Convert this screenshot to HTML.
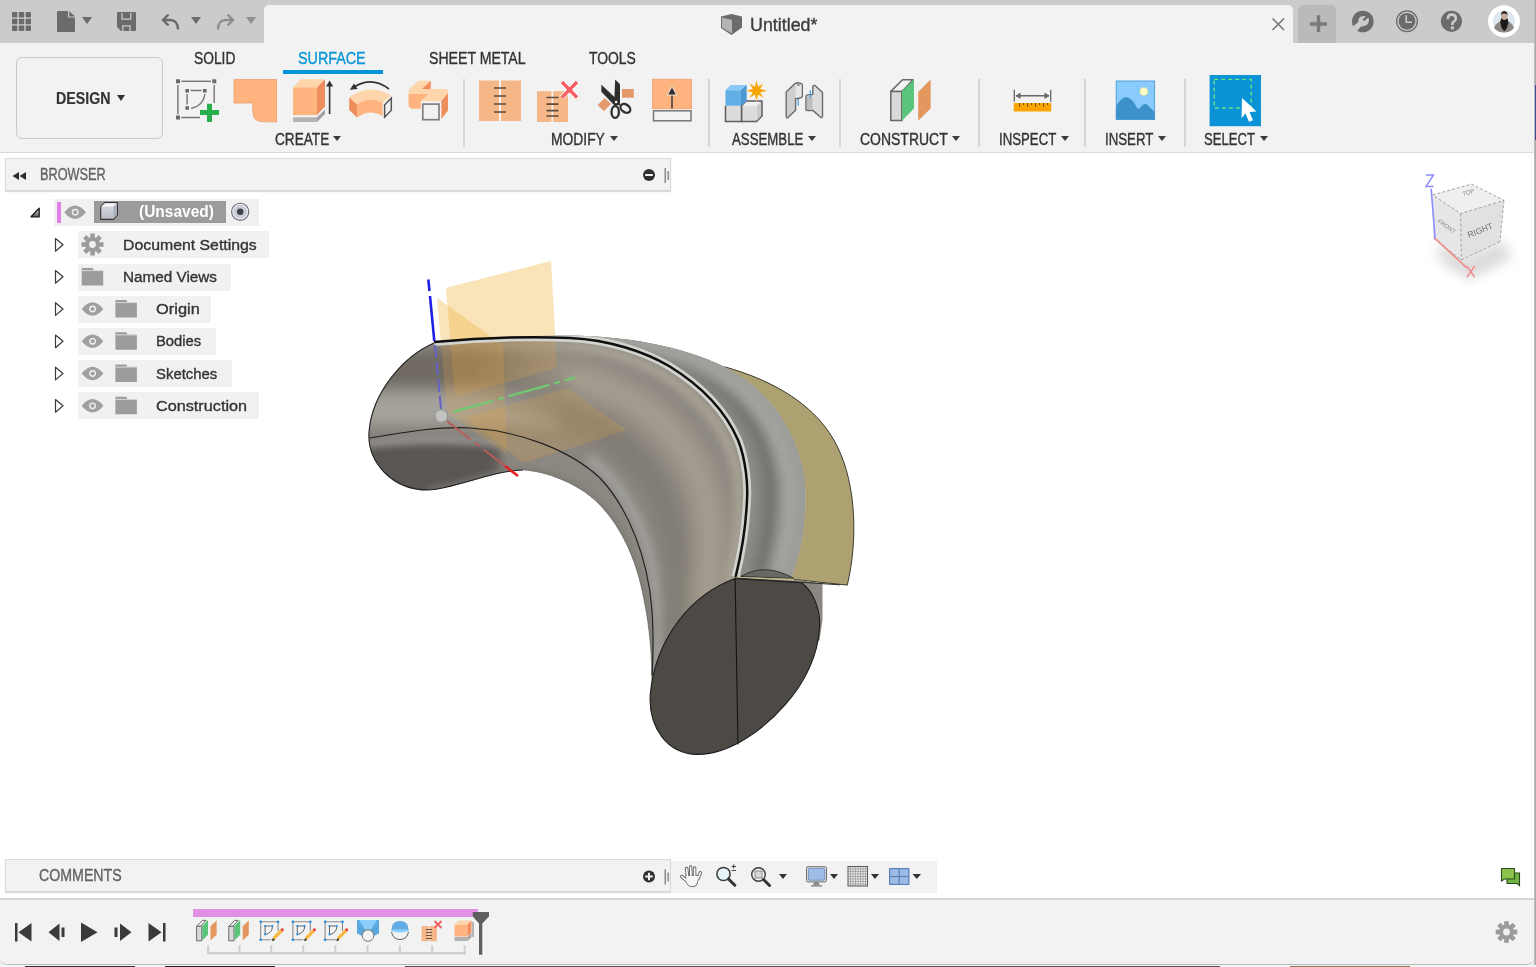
<!DOCTYPE html>
<html><head><meta charset="utf-8">
<style>
*{margin:0;padding:0;box-sizing:border-box}
html,body{width:1536px;height:967px;overflow:hidden;background:#ececec;font-family:"Liberation Sans",sans-serif}
.a{position:absolute}
svg{position:absolute;overflow:visible}
#win{position:absolute;left:0;top:0;width:1534px;height:965px;background:#fff;border-radius:0 0 8px 8px;overflow:hidden;border-bottom:1px solid #b9b9b9}
.t{position:absolute;white-space:nowrap;color:#333;line-height:1;transform-origin:0 0;-webkit-text-stroke:0.35px currentColor}
.tab{font-size:16px;top:50.5px}
.grp{font-size:16px;top:131.5px}
.sep{position:absolute;top:79px;width:2px;height:68px;background:#d6d6d6}
.arr{position:absolute;width:0;height:0;border-left:4px solid transparent;border-right:4px solid transparent;border-top:5.5px solid #3c3c3c}
.panel{position:absolute;background:#f2f2f2;border:1px solid #d9d9d9;box-shadow:0 1px 1px rgba(0,0,0,.14)}
.row{position:absolute;background:#f1f1f1;height:27px}
.rt{position:absolute;font-size:15.5px;color:#333;white-space:nowrap;line-height:1;transform-origin:0 0;-webkit-text-stroke:0.35px currentColor}
.tri{position:absolute}
</style></head><body>
<div class="a" style="left:0;top:965px;width:1536px;height:2px;background:#f4f4f4"></div>
<div class="a" style="left:25px;top:966px;width:110px;height:1px;background:#333"></div>
<div class="a" style="left:165px;top:966px;width:110px;height:1px;background:#222"></div>
<div class="a" style="left:405px;top:966px;width:815px;height:1px;background:#555"></div>
<div class="a" style="left:1290px;top:966px;width:120px;height:1px;background:#8a7a5a"></div>
<div class="a" style="left:1534px;top:0;width:2px;height:965px;background:linear-gradient(90deg,#c4c4c8,#a2a2a6)"></div>
<div class="a" style="left:1534.5px;top:85px;width:1.5px;height:55px;background:#3b4a8a"></div>
<div id="win">
<!-- ===== top bar ===== -->
<div class="a" style="left:0;top:0;width:1535px;height:43px;background:#cbcbcb"></div>
<div class="a" style="left:264px;top:5px;width:1029px;height:38px;background:#f2f2f2;border-radius:5px 5px 0 0"></div>
<div class="a" style="left:1298px;top:5px;width:38px;height:38px;background:#bababa;border-radius:5px 5px 0 0"></div>
<div class="a" style="left:0;top:43px;width:1535px;height:110px;background:#f2f2f2;border-bottom:1px solid #dadada"></div>

<!-- ===== tabs ===== -->
<div class="t tab" style="left:193.6px;transform:scaleX(0.8625)">SOLID</div>
<div class="t tab" style="left:298px;color:#0696d7;transform:scaleX(0.895)">SURFACE</div>
<div class="a" style="left:283px;top:70px;width:100px;height:4px;background:#0696d7"></div>
<div class="t tab" style="left:429.4px;transform:scaleX(0.881)">SHEET METAL</div>
<div class="t tab" style="left:588.8px;transform:scaleX(0.869)">TOOLS</div>

<!-- ===== design button ===== -->
<div class="a" style="left:16px;top:57px;width:147px;height:82px;border:1.5px solid #cacaca;border-radius:6px"></div>
<div class="t" style="left:56px;top:90.5px;font-size:16px;font-weight:bold;color:#333;transform:scaleX(0.89);-webkit-text-stroke:0.15px #333">DESIGN</div>
<div class="arr" style="left:117px;top:95px;border-left-width:4px;border-right-width:4px;border-top:6px solid #333"></div>

<!-- ===== group labels ===== -->
<div class="t grp" style="left:274.9px;transform:scaleX(0.852)">CREATE</div>
<div class="arr" style="left:333px;top:135.5px"></div>
<div class="t grp" style="left:550.5px;transform:scaleX(0.865)">MODIFY</div>
<div class="arr" style="left:610px;top:135.5px"></div>
<div class="t grp" style="left:731.9px;transform:scaleX(0.827)">ASSEMBLE</div>
<div class="arr" style="left:807.5px;top:135.5px"></div>
<div class="t grp" style="left:859.5px;transform:scaleX(0.873)">CONSTRUCT</div>
<div class="arr" style="left:952px;top:135.5px"></div>
<div class="t grp" style="left:999px;transform:scaleX(0.826)">INSPECT</div>
<div class="arr" style="left:1061px;top:135.5px"></div>
<div class="t grp" style="left:1104.7px;transform:scaleX(0.829)">INSERT</div>
<div class="arr" style="left:1158px;top:135.5px"></div>
<div class="t grp" style="left:1204.3px;transform:scaleX(0.818)">SELECT</div>
<div class="arr" style="left:1259.5px;top:135.5px"></div>
<div class="sep" style="left:462.5px"></div>
<div class="sep" style="left:708px"></div>
<div class="sep" style="left:838.5px"></div>
<div class="sep" style="left:978px"></div>
<div class="sep" style="left:1084px"></div>
<div class="sep" style="left:1183.5px"></div>

<!-- ===== title ===== -->
<div class="t" style="left:749.7px;top:16.7px;font-size:17.5px;color:#3c3c3c;transform:scaleX(1.02)">Untitled*</div>

<!-- ===== browser ===== -->
<div class="panel" style="left:5px;top:158px;width:666px;height:33px"></div>
<div class="t" style="left:39.8px;top:167.3px;font-size:16px;color:#636363;transform:scaleX(0.795)">BROWSER</div>

<!-- tree rows -->
<div class="row" style="left:54px;top:199px;width:205px"></div>
<div class="a" style="left:56.5px;top:201.5px;width:4px;height:21px;background:#e181e6"></div>
<div class="a" style="left:94px;top:201.3px;width:131.5px;height:21.5px;background:#9b9b9b"></div>
<div class="t" style="left:138.9px;top:203.9px;font-size:16px;font-weight:bold;color:#fff;transform:scaleX(0.968);-webkit-text-stroke:0">(Unsaved)</div>

<div class="row" style="left:77.6px;top:231px;width:191px"></div>
<div class="rt" style="left:122.7px;top:236.5px;transform:scaleX(1.021)">Document Settings</div>
<div class="row" style="left:77.6px;top:263.5px;width:153px"></div>
<div class="rt" style="left:122.5px;top:268.7px;transform:scaleX(0.986)">Named Views</div>
<div class="row" style="left:77.6px;top:295.5px;width:133px"></div>
<div class="rt" style="left:156px;top:300.9px;transform:scaleX(1.059)">Origin</div>
<div class="row" style="left:77.6px;top:328px;width:138.5px"></div>
<div class="rt" style="left:156px;top:333.2px;transform:scaleX(0.954)">Bodies</div>
<div class="row" style="left:77.6px;top:360px;width:154.5px"></div>
<div class="rt" style="left:156px;top:365.5px;transform:scaleX(0.961)">Sketches</div>
<div class="row" style="left:77.6px;top:392.3px;width:181px"></div>
<div class="rt" style="left:156px;top:397.7px;transform:scaleX(1.046)">Construction</div>

<!-- ===== comments ===== -->
<div class="panel" style="left:5px;top:859px;width:666px;height:33px"></div>
<div class="t" style="left:39.4px;top:868.3px;font-size:16px;color:#636363;transform:scaleX(0.886)">COMMENTS</div>
<div class="a" style="left:671px;top:861px;width:266px;height:32px;background:#f2f2f2"></div>

<!-- ===== timeline ===== -->
<div class="a" style="left:0;top:898px;width:1534px;height:67px;background:#f2f2f2;border-top:2px solid #d4d4d4"></div>
<div class="a" style="left:193px;top:909px;width:285px;height:8px;background:#e290e6"></div>


<svg width="1536" height="967" style="left:0;top:0" viewBox="0 0 1536 967">
<!-- grid -->
<g fill="#6b6b6b">
<rect x="12" y="12" width="5.4" height="5.4" rx="1"/><rect x="18.8" y="12" width="5.4" height="5.4" rx="0.5"/><rect x="25.6" y="12" width="5.4" height="5.4" rx="1"/>
<rect x="12" y="18.8" width="5.4" height="5.4" rx="0.5"/><rect x="18.8" y="18.8" width="5.4" height="5.4" rx="0.5"/><rect x="25.6" y="18.8" width="5.4" height="5.4" rx="0.5"/>
<rect x="12" y="25.6" width="5.4" height="5.4" rx="1"/><rect x="18.8" y="25.6" width="5.4" height="5.4" rx="0.5"/><rect x="25.6" y="25.6" width="5.4" height="5.4" rx="1"/>
</g>
<!-- file -->
<path d="M58 11 H68 V17.5 H75 V31 Q75 32 74 32 H58 Q57 32 57 31 V12 Q57 11 58 11 Z" fill="#6b6b6b"/>
<path d="M69.2 11 L75 16.6 H69.2 Z" fill="#6b6b6b"/>
<path d="M82 17 H92 L87 24 Z" fill="#6b6b6b"/>
<!-- save -->
<path d="M118 12 H135 Q136 12 136 13 V30 Q136 31 135 31 H121 L117 27 V13 Q117 12 118 12 Z" fill="#6b6b6b"/>
<path d="M122 13 V19.2 H130.8 V13" fill="none" stroke="#cbcbcb" stroke-width="1.3"/>
<path d="M122.8 31 V25.8 H130 V31" fill="none" stroke="#cbcbcb" stroke-width="1.3"/>
<!-- undo -->
<path d="M168.5 14.5 L163 20 L168.5 25.5 M163.5 20 H170 Q178 20 178 29.6" fill="none" stroke="#6b6b6b" stroke-width="2.4" stroke-linejoin="miter"/>
<path d="M191 17 H201 L196 24 Z" fill="#6b6b6b"/>
<!-- redo -->
<path d="M227.5 14.5 L233 20 L227.5 25.5 M232.5 20 H226 Q218 20 218 29.6" fill="none" stroke="#8f8f8f" stroke-width="2.4"/>
<path d="M246 17 H256 L251 24 Z" fill="#8f8f8f"/>
<!-- title cube -->
<path d="M721 16.5 L731.5 14 L742 16.5 V27.5 L731.5 35 L721 28 Z" fill="#6b6b6b"/>
<path d="M722 17.6 L732 20 V33.6 L722 27.4 Z" fill="#b3b5b3"/>
<!-- close x -->
<path d="M1272.5 18.5 L1284 30 M1284 18.5 L1272.5 30" stroke="#777" stroke-width="1.6"/>
<!-- plus -->
<path d="M1318.5 15.2 V32 M1310 24 H1327" stroke="#7a7a7a" stroke-width="3.4"/>
<!-- wrench circle -->
<circle cx="1362.8" cy="21.5" r="10.8" fill="#6b6b6b"/>
<path d="M1352.3 27 L1358.3 22 Q1358 17.5 1361.8 16.2 Q1363.6 15.6 1365.6 16.2 L1362.6 19.8 Q1363.6 21.6 1365 20.6 L1368.4 17.6 Q1369.8 21.8 1367.4 24.6 Q1364.8 26.8 1361.2 26.3 L1356.8 31.2 Z" fill="#cbcbcb"/>
<!-- clock -->
<circle cx="1407" cy="21.3" r="10.4" fill="none" stroke="#6b6b6b" stroke-width="1.3"/>
<circle cx="1407" cy="21.3" r="8.4" fill="#6b6b6b"/>
<path d="M1406.2 15.2 V22.3 H1412" fill="none" stroke="#cbcbcb" stroke-width="1.5"/>
<!-- help -->
<circle cx="1451.5" cy="21.3" r="10.6" fill="#6b6b6b"/>
<path d="M1447.8 19.2 Q1447.8 14.6 1451.8 14.6 Q1455.8 14.6 1455.8 18.4 Q1455.8 20.6 1453.8 21.6 Q1452.3 22.4 1452.3 24.4 V25" fill="none" stroke="#cbcbcb" stroke-width="2.6"/>
<rect x="1450.8" y="26.4" width="3" height="3" fill="#cbcbcb"/>
<!-- avatar -->
<circle cx="1504" cy="21.3" r="16" fill="#fff"/>
<circle cx="1504" cy="21.3" r="11" fill="#dde7ee"/>
<path d="M1494 28 Q1495.5 23 1500.5 21.5 L1508 21.5 Q1512.5 23 1514 28 Q1510 32.5 1504 32.5 Q1498 32.5 1494 28 Z" fill="#8b8886"/>
<path d="M1501.2 16.5 Q1501 12 1504.3 12 Q1507.6 12 1507.4 16.5 Q1507.2 19.5 1504.3 20.2 Q1501.4 19.5 1501.2 16.5 Z" fill="#c9a99a"/>
<path d="M1501 16 Q1500.8 11.2 1504.3 11 Q1507.8 11.2 1507.6 16 L1506.8 14 Q1504.3 13 1501.8 14 Z" fill="#2a211d"/>
<path d="M1501.2 18 Q1504.3 22 1507.4 18 L1508.4 22 Q1507 30 1504.5 31 Q1501.5 30 1500.2 22 Z" fill="#1a1a1a"/>
</svg>

<svg width="1536" height="967" style="left:0;top:0" viewBox="0 0 1536 967">
<!-- sketch -->
<g fill="#6a6a6a">
<rect x="176" y="79.3" width="4" height="4"/><rect x="212.3" y="79.3" width="4" height="4"/><rect x="176" y="115.5" width="4" height="4"/>
<rect x="185.4" y="89" width="3.6" height="3.6"/><rect x="203" y="89" width="3.6" height="3.6"/><rect x="185.4" y="106.2" width="3.6" height="3.6"/>
</g>
<g stroke="#737373" stroke-width="1.4" fill="none">
<path d="M181.2 81.3 H211"/><path d="M177.9 85 V114.2"/><path d="M214.2 85 V103"/><path d="M181.2 117.5 H200"/>
<path d="M190.5 90.5 H201.6"/><path d="M187.1 94 V104.5"/><path d="M205 94 Q203 106 191.2 108.5"/>
</g>
<path d="M209.5 103.7 V122 M200 112.6 H219" stroke="#27b04b" stroke-width="5"/>
<!-- boundary fill L -->
<path d="M234 79.5 H276.5 V121.8 H263 Q252.8 121.8 252.8 111.5 V103 H234 Z" fill="#ffb47f" stroke="#eda06e" stroke-width="0.8"/>
<!-- extrude -->
<path d="M293 117.3 H317 V122 H293 Z" fill="#b3b3b3"/>
<path d="M317 117.3 L325 109.4 V114 L317 122 Z" fill="#a0a0a0"/>
<path d="M293 87.2 H317 V115.1 H293 Z" fill="#ffb47f"/>
<path d="M293 87.2 L300.9 79.3 H325 L317 87.2 Z" fill="#ffd5ab"/>
<path d="M317 87.2 L325 79.3 V106.5 L317 115.1 Z" fill="#ee8e5d"/>
<path d="M329.6 85.5 V114" stroke="#333" stroke-width="1.6"/>
<path d="M326 86.5 L329.6 80.6 L333.2 86.5 Z" fill="#333"/>
<!-- revolve -->
<path d="M389 89 Q372 76 354.5 86.8" fill="none" stroke="#333" stroke-width="1.6"/>
<path d="M349.8 89.8 L354 83.4 L357.6 89 Z" fill="#333"/>
<path d="M349.2 97.2 Q370 82.6 391.2 95.8 L382.6 103 Q370 95.5 357.1 104.4 Z" fill="#ffd5ab"/>
<path d="M349.2 97.2 L357.1 104.4 V117.6 L349.2 110.1 Z" fill="#ee8e5d"/>
<path d="M357.1 104.4 Q370 95.5 382.6 103 V116.2 Q370 108 357.1 117.6 Z" fill="#ffb47f"/>
<path d="M384.6 105 L391.3 98 V110.2 L384.6 117.2 Z" fill="#f2f2f2" stroke="#555" stroke-width="1.5"/>
<!-- patch -->
<path d="M408.5 94 H428.8 L420.9 101.3 V108.8 H413 Q408.5 108.8 408.5 104 Z" fill="#ffb47f"/>
<path d="M408.5 94 V92 Q408.5 90 410 88.6 L418.4 80.7 H430.8 L421.9 88.9 H445.5 Q448 88.9 448 91.6 V93 L441.2 101.3 H420.9 L428.8 94 Z" fill="#ffd5ab"/>
<path d="M430.8 80.7 V88.9 H421.9 Z" fill="#ee8e5d"/>
<path d="M441.2 101.3 L448 93 V109.5 Q448 111 446.5 112.6 L441.2 119.2 Z" fill="#ee8e5d"/>
<rect x="420.9" y="102.2" width="20.3" height="19" fill="#f2f2f2"/>
<rect x="422.8" y="104.1" width="16.2" height="15.6" fill="#f2f2f2" stroke="#808080" stroke-width="1.7"/>
<!-- stitch -->
<rect x="479" y="80.5" width="20" height="40.5" fill="#f5b787"/>
<rect x="501" y="80.5" width="20" height="40.5" fill="#f5b787"/>
<path d="M494 88 H506 M494 96 H506 M494 104 H506 M494 112 H506" stroke="#5a4a3f" stroke-width="1.7"/>
<!-- unstitch -->
<rect x="537" y="91.2" width="14.5" height="30.8" fill="#f5b787"/>
<rect x="553.2" y="91.2" width="14.8" height="30.8" fill="#f5b787"/>
<path d="M546.5 97.5 H558.5 M546.5 104.2 H558.5 M546.5 110.7 H558.5 M546.5 116 H558.5" stroke="#5a4a3f" stroke-width="1.7"/>
<path d="M562 82 L577 97.5 M577 82 L562 97.5" stroke="#fff" stroke-width="5"/>
<path d="M562 82 L577 97.5 M577 82 L562 97.5" stroke="#f55f62" stroke-width="3.4"/>
<!-- scissors -->
<path d="M622 89 H633.8 V97.7 H622 Z" fill="#e3996a"/>
<path d="M597.8 105 L604.7 97.9 L611.1 104.1 L603.8 111.2 Z" fill="#e3996a"/>
<path d="M601.4 84.8 L615.5 98 L616.5 104.5 L614 105 L601.4 91.7 Z" fill="#2e2e2e"/>
<path d="M615.2 79.6 L620 84.3 V105 L614 106 Z" fill="#2e2e2e"/>
<circle cx="616.1" cy="102" r="1.3" fill="#f2f2f2"/>
<ellipse cx="615.2" cy="112" rx="3.7" ry="5.9" fill="none" stroke="#2e2e2e" stroke-width="2.3"/>
<ellipse cx="625.4" cy="108.4" rx="5.4" ry="3.8" fill="none" stroke="#2e2e2e" stroke-width="2.3" transform="rotate(35 625.4 108.4)"/>
<!-- extend -->
<rect x="652.5" y="79.2" width="39" height="29.5" fill="#ffb47f" stroke="#eda06e" stroke-width="0.8"/>
<rect x="653.5" y="110.8" width="37.5" height="10" fill="#f2f2f2" stroke="#777" stroke-width="1.5"/>
<path d="M672 87 V108.5" stroke="#444" stroke-width="1.6"/>
<path d="M667.5 95 L672 86.5 L676.5 95 Z" fill="#2e2e2e" stroke="#fff" stroke-width="0.8"/>
<!-- new component -->
<path d="M741.5 106 L746 101 H762 V116 L756.5 121.5 H741.5 Z" fill="#dcdcdc" stroke="#5e5e5e" stroke-width="1.5" stroke-linejoin="round"/>
<path d="M742.5 106 L746.5 102 H761 L757 106 Z" fill="#efefef"/>
<path d="M757 106 L761 102 V115.5 L757 120.5 Z" fill="#c9c9c9"/>
<path d="M725.5 105.8 V121.5 H741.5 V105.8" fill="#dcdcdc" stroke="#5e5e5e" stroke-width="1.5"/>
<path d="M725.5 90.5 L731 85 H746.5 V101 L741 105.8 H725.5 Z" fill="#64aee6"/>
<path d="M725.5 90.5 L731 85 H746.5 L741 90.5 Z" fill="#8cc8f6"/>
<path d="M741 90.5 L746.5 85 V101 L741 105.8 Z" fill="#4a97d2"/>
<path d="M756.5 79.7 L758.2 86.6 L763.9 83.1 L760.4 88.8 L767.4 90.7 L760.4 92.6 L763.9 98.3 L758.2 94.8 L756.5 101.8 L754.8 94.8 L749.1 98.3 L752.6 92.6 L745.6 90.7 L752.6 88.8 L749.1 83.1 L754.8 86.6 Z" fill="#f7a402" stroke="#fff" stroke-width="0.5" stroke-opacity="0.6"/>
<!-- joint -->
<path d="M786.2 116.5 V92 L795 83.6 Q798.5 81.6 802.3 84.4 V96.6 Q801 98.6 795.6 98.6 V110.2 L788 117.6 Q786.2 118.2 786.2 116.5 Z" fill="#cfcfcf" stroke="#6a6a6a" stroke-width="1.4" stroke-linejoin="round"/>
<path d="M795.6 84.6 Q798.8 83.4 801.5 85 V96.2 Q799 97.6 795.6 97.2 Z" fill="#e6e6e6"/>
<ellipse cx="798.3" cy="85" rx="1.6" ry="0.8" fill="#6a6a6a"/>
<path d="M798.2 98.8 V105.8" stroke="#2e93e6" stroke-width="1.1"/>
<path d="M806 96.5 Q806 94.6 809.5 94.6 Q812.8 94.6 812.8 94.6 V86.6 Q813.5 84.8 815 85.6 L822.5 92.6 V116.6 Q822 118.2 820.6 117.2 L812.8 110.4 Q809.5 111 806 110 Z" fill="#dcdcdc" stroke="#6a6a6a" stroke-width="1.4" stroke-linejoin="round"/>
<path d="M806.8 96.8 Q809.5 95.6 812.5 96.8 V109.6 Q809.5 110.4 806.8 109.4 Z" fill="#bdbdbd"/>
<path d="M810.3 90.2 V97.4" stroke="#2e93e6" stroke-width="1.1"/>
<!-- construct -->
<path d="M890.8 91.4 L902.5 79.8 H913 L902 91.4 Z" fill="#f4f4f4" stroke="#686868" stroke-width="1.5" stroke-linejoin="round"/>
<path d="M890.8 91.4 V120.5 H901.8 V91.4 Z" fill="#d9d9d9" stroke="#686868" stroke-width="1.5"/>
<path d="M902 91.2 L914 79.6 V108.6 L902 120.8 Z" fill="#59c47a"/>
<path d="M918.2 92 L930.6 79.6 V108.4 L918.2 120.8 Z" fill="#e4965f"/>
<!-- measure -->
<path d="M1014.3 89.7 V101.8 M1050.7 89.7 V101.8" stroke="#676767" stroke-width="1.3"/>
<path d="M1016 95.8 H1049" stroke="#676767" stroke-width="1.6"/>
<path d="M1015.5 95.8 L1020.5 92.5 V99 Z M1049.5 95.8 L1044.5 92.5 V99 Z" fill="#676767"/>
<rect x="1013.7" y="103" width="37.5" height="8.5" fill="#fba500"/>
<path d="M1019.5 103 V106.5 M1023.5 103 V105 M1027.5 103 V106.5 M1031.5 103 V105 M1035.5 103 V106.5 M1039.5 103 V105 M1043.5 103 V106.5 M1047.5 103 V105" stroke="#6b4c12" stroke-width="1"/>
<!-- insert -->
<rect x="1116.2" y="81" width="38.4" height="38.4" fill="#89cbfd" stroke="#4b9ad6" stroke-width="0.9"/>
<path d="M1116.2 106 Q1122 96 1127.5 97.5 Q1133 99 1136.5 107 Q1138 110 1140 108 Q1144 102 1147.5 105 L1154.6 112 V119.4 H1116.2 Z" fill="#3d91cb"/>
<circle cx="1143.8" cy="91.5" r="4" fill="#fffbc6" stroke="#e2d98c" stroke-width="0.5"/>
<!-- select -->
<rect x="1209.6" y="75" width="51.4" height="51.2" fill="#0a93d6"/>
<rect x="1214.2" y="79.4" width="37" height="28.6" fill="none" stroke="#6be483" stroke-width="1.4" stroke-dasharray="4 3"/>
<path d="M1242 98 L1256.5 111.6 L1249.5 112 L1253 120.2 L1249 121.8 L1245.5 113.4 L1241.5 118.2 Z" fill="#fff"/>
</svg>

<svg width="1536" height="967" style="left:0;top:0" viewBox="0 0 1536 967">
<!-- browser header -->
<path d="M12.5 176 L19 172 V180 Z M19.5 176 L26 172 V180 Z" fill="#2f2f2f"/>
<circle cx="649" cy="175" r="6" fill="#303030"/>
<rect x="645.2" y="174" width="7.6" height="2" fill="#f2f2f2"/>
<rect x="664.5" y="168" width="1.5" height="15" fill="#8a8a8a"/>
<rect x="667.3" y="171" width="1.8" height="9" fill="#9a9a9a"/>
<!-- comments header -->
<circle cx="649" cy="876.5" r="6" fill="#303030"/>
<path d="M645.2 876.5 H652.8 M649 872.7 V880.3" stroke="#f2f2f2" stroke-width="2"/>
<rect x="664.5" y="869.5" width="1.5" height="15" fill="#8a8a8a"/>
<rect x="667.3" y="872.5" width="1.8" height="9" fill="#9a9a9a"/>
<!-- tree: unsaved -->
<defs><linearGradient id="trig" x1="0" y1="0" x2="0" y2="1"><stop offset="0" stop-color="#eee"/><stop offset="1" stop-color="#555"/></linearGradient></defs>
<path d="M31 216.8 L39.2 208.2 V216.8 Z" fill="url(#trig)" stroke="#1a1a1a" stroke-width="1.3" stroke-linejoin="round"/>
<g>
<path d="M64.3 212.2 Q75 198.7 86 212.2 Q75 225.7 64.3 212.2 Z" fill="#a0a0a0"/>
<circle cx="75.2" cy="212.2" r="3.4" fill="#f1f1f1"/><circle cx="75.2" cy="212.2" r="2" fill="#a0a0a0"/>
</g>
<defs><linearGradient id="cubef" x1="0" y1="0" x2="0" y2="1"><stop offset="0" stop-color="#dcdfe4"/><stop offset="1" stop-color="#b6bbc5"/></linearGradient></defs>
<path d="M100.7 207 L104.8 202.6 H117.4 V215 L113.4 219.4 H100.7 Z" fill="url(#cubef)" stroke="#333" stroke-width="1.1" stroke-linejoin="round"/>
<path d="M101.3 206.6 L105 203.2 H116.6 L113 206.6 Z" fill="#f4f5f7"/>
<path d="M113.6 207.2 L116.9 203.6 V214.8 L113.6 218.6 Z" fill="#a9afba"/>
<circle cx="240.2" cy="211.8" r="8.6" fill="#e6e8ee" stroke="#6a6a6a" stroke-width="1.1"/>
<circle cx="240.2" cy="211.8" r="6.8" fill="#c9ced9"/>
<circle cx="240.2" cy="211.8" r="3.3" fill="#404349"/>
<!-- expand triangles -->
<g fill="none" stroke="#3a3a3a" stroke-width="1.2" stroke-linejoin="round">
<path d="M55.5 238.5 L63 244.8 L55.5 251.2 Z"/>
<path d="M55.5 270.5 L63 276.8 L55.5 283.2 Z"/>
<path d="M55.5 302.7 L63 309 L55.5 315.4 Z"/>
<path d="M55.5 335 L63 341.3 L55.5 347.7 Z"/>
<path d="M55.5 367.2 L63 373.5 L55.5 379.9 Z"/>
<path d="M55.5 399.5 L63 405.8 L55.5 412.2 Z"/>
</g>
<!-- gear -->
<g transform="translate(92.5 244.5)" fill="#9c9c9c">
<circle r="7.5"/>
<rect x="-2.3" y="-11" width="4.6" height="22"/>
<rect x="-2.3" y="-11" width="4.6" height="22" transform="rotate(45)"/>
<rect x="-2.3" y="-11" width="4.6" height="22" transform="rotate(90)"/>
<rect x="-2.3" y="-11" width="4.6" height="22" transform="rotate(135)"/>
<circle r="3.4" fill="#f1f1f1"/>
</g>
<!-- folders -->
<defs>
<g id="fold"><path d="M0 0 H11 L12 2.2 H21.5 V17.5 H0 Z" fill="#9c9c9c"/><path d="M0 2.6 H21.5" stroke="#e8e8e8" stroke-width="0.8"/></g>
<g id="eye"><path d="M0 0 Q10.8 -13.5 21.7 0 Q10.8 13.5 0 0 Z" fill="#a0a0a0"/><circle cx="10.9" cy="0" r="3.4" fill="#f1f1f1"/><circle cx="10.9" cy="0" r="2" fill="#a0a0a0"/></g>
</defs>
<use href="#fold" x="81.7" y="268"/>
<use href="#eye" x="81.7" y="309"/><use href="#fold" x="115.4" y="300"/>
<use href="#eye" x="81.7" y="341.3"/><use href="#fold" x="115.4" y="332.3"/>
<use href="#eye" x="81.7" y="373.5"/><use href="#fold" x="115.4" y="364.5"/>
<use href="#eye" x="81.7" y="405.8"/><use href="#fold" x="115.4" y="396.8"/>
</svg>

<svg width="1536" height="967" style="left:0;top:0" viewBox="0 0 1536 967">
<!-- nav toolbar -->
<!-- hand -->
<g stroke-linecap="round" fill="none">
<g stroke="#5a5a5a" stroke-width="3.4"><path d="M686.6 868.5 L687.6 877"/><path d="M690.6 867 L691 876"/><path d="M694.6 868 L694.6 876"/><path d="M700.4 872.8 L698 878.5"/><path d="M681.8 876.6 L686.5 880.5"/></g>
<path d="M686 876 H698.8 L697.5 881 Q696.5 886.3 692.5 886.3 Q688 886.3 686.5 882 Z" fill="#5a5a5a" stroke="#5a5a5a" stroke-width="1.4"/>
<g stroke="#fafafa" stroke-width="1.7"><path d="M686.6 868.5 L687.6 877"/><path d="M690.6 867 L691 876"/><path d="M694.6 868 L694.6 876"/><path d="M700.4 872.8 L698 878.5"/><path d="M681.8 876.6 L686.5 880.5"/></g>
<path d="M686 876 H698.8 L697.5 881 Q696.5 886.3 692.5 886.3 Q688 886.3 686.5 882 Z" fill="#f4f6f8"/>
</g>
<!-- zoom + -->
<circle cx="723.5" cy="874" r="6.6" fill="#e6f3f8" stroke="#3c3c3c" stroke-width="1.5"/>
<path d="M728.5 879 L734.8 885.3" stroke="#333" stroke-width="3" stroke-linecap="round"/>
<path d="M731.5 866.5 H736 M733.7 864.3 V868.7 M731.5 870.5 H736" stroke="#333" stroke-width="0.9"/>
<!-- zoom window -->
<circle cx="758.5" cy="874.5" r="6.8" fill="#eef4f6" stroke="#3c3c3c" stroke-width="1.4"/>
<rect x="755" y="871" width="7" height="7" fill="#d8d8d8" stroke="#777" stroke-width="0.8"/>
<path d="M763.5 879.5 L769.5 885.5" stroke="#333" stroke-width="3" stroke-linecap="round"/>
<path d="M779 874 H787 L783 879 Z" fill="#333"/>
<!-- display -->
<rect x="806.5" y="866.7" width="20" height="15.2" rx="1.5" fill="#e2e2e2" stroke="#707070" stroke-width="1"/>
<rect x="808.3" y="868.4" width="16.4" height="11.8" rx="1" fill="#9dbde6" stroke="#5a78a8" stroke-width="0.7"/>
<path d="M814 882 H818.5 L819.5 885 H813 Z" fill="#8a8a8a"/>
<rect x="811" y="885" width="11" height="1.8" fill="#9a9a9a"/>
<path d="M830 874 H838 L834 879 Z" fill="#333"/>
<!-- grid -->
<rect x="848" y="866.5" width="19.5" height="19.5" fill="#e8e8e8" stroke="#555" stroke-width="1"/>
<path d="M850.5 866.5 V886 M853 866.5 V886 M855.5 866.5 V886 M858 866.5 V886 M860.5 866.5 V886 M863 866.5 V886 M865.5 866.5 V886 M848 869 H867.5 M848 871.5 H867.5 M848 874 H867.5 M848 876.5 H867.5 M848 879 H867.5 M848 881.5 H867.5 M848 884 H867.5" stroke="#8a8a8a" stroke-width="0.6"/>
<path d="M871 874 H879 L875 879 Z" fill="#333"/>
<!-- viewports -->
<rect x="889" y="868" width="20.5" height="17" rx="1" fill="#5a7fb8"/>
<rect x="890.2" y="869.2" width="8.4" height="6.7" fill="#9cbce6"/><rect x="899.8" y="869.2" width="8.5" height="6.7" fill="#9cbce6"/>
<rect x="890.2" y="877.1" width="8.4" height="6.7" fill="#9cbce6"/><rect x="899.8" y="877.1" width="8.5" height="6.7" fill="#9cbce6"/>
<path d="M912.5 874 H921 L916.8 879 Z" fill="#333"/>
<!-- green comment -->
<path d="M1507 873 H1519.5 V885.5 L1517 883.5 H1507 Z" fill="#70b442" stroke="#2c4a20" stroke-width="1.1"/>
<path d="M1501.5 868.5 H1514.5 V879 H1504.5 L1501.5 881 Z" fill="#8bc34a" stroke="#2c4a20" stroke-width="1.1"/>
<!-- timeline controls -->
<g fill="#3a3a3a">
<rect x="15" y="923" width="2.5" height="18.5"/><path d="M31.5 923 V941.5 L18.5 932.2 Z"/>
<path d="M48.5 932.2 L59.5 923.5 V941 Z"/><rect x="61.5" y="927.5" width="3" height="9.5"/>
<path d="M81 922.5 L97.5 932.2 L81 942 Z"/>
<rect x="114.5" y="927.5" width="3" height="9.5"/><path d="M120 923.5 L131.5 932.2 L120 941 Z"/>
<path d="M148.5 923 L161.5 932.2 L148.5 941.5 Z"/><rect x="163" y="923" width="2.5" height="18.5"/>
</g>
<!-- gear bottom right -->
<g transform="translate(1506.5 932)" fill="#9c9c9c">
<circle r="7.4"/>
<rect x="-2.4" y="-10.8" width="4.8" height="21.6"/>
<rect x="-2.4" y="-10.8" width="4.8" height="21.6" transform="rotate(45)"/>
<rect x="-2.4" y="-10.8" width="4.8" height="21.6" transform="rotate(90)"/>
<rect x="-2.4" y="-10.8" width="4.8" height="21.6" transform="rotate(135)"/>
<circle r="3.4" fill="#f2f2f2"/>
</g>
<!-- timeline ticks -->
<path d="M207 953.3 H466" stroke="#cfcfcf" stroke-width="2.6"/>
<path d="M208.1 945.3 V953 M239.5 945.3 V953 M271.2 945.3 V953 M303.2 945.3 V953 M335.3 945.3 V953 M367.6 945.3 V953 M399.9 945.3 V953 M432.2 945.3 V953 M464.6 945.3 V953" stroke="#cfcfcf" stroke-width="2"/>
<!-- marker -->
<path d="M472.8 912 H489 V916.5 L482.3 923.5 V954.7 H479 V923.5 L472.8 916.5 Z" fill="#5f5f5f"/>
<!-- timeline feature icons -->
<defs>
<g id="tlc">
<path d="M0.6 6.5 L6.5 0.6 H10 L4.5 6.5 Z" fill="#f4f4f4" stroke="#6b6b6b" stroke-width="1"/>
<path d="M0.6 6.5 V21 H5.8 V6.5 Z" fill="#d9d9d9" stroke="#6b6b6b" stroke-width="1"/>
<path d="M6.2 6.2 L12 0.3 V15 L6.2 20.8 Z" fill="#59c47a"/>
<path d="M14.5 6.5 L20.6 0.6 V15 L14.5 20.8 Z" fill="#e4965f"/>
</g>
<g id="tls">
<path d="M1.8 1.2 H18.5 M1.3 1.8 V19 M1.8 19.3 H12 M18.7 1.8 V10.5" stroke="#8c8c8c" stroke-width="1.1" fill="none"/>
<path d="M6.2 5.5 H12.5 M5.7 6 V13.5 M13 6.5 Q12.5 12.5 6.5 13.8" stroke="#555" stroke-width="0.9" fill="none"/>
<g fill="#1d8ce8"><circle cx="1.3" cy="1.2" r="1.3"/><circle cx="18.7" cy="1.2" r="1.3"/><circle cx="1.3" cy="19.3" r="1.3"/><circle cx="5.7" cy="5.5" r="1.1"/><circle cx="13" cy="5.5" r="1.1"/><circle cx="5.7" cy="13.8" r="1.1"/></g>
<path d="M12.5 20.5 L14 16 L21 9 L23.2 11.2 L16.2 18.2 Z" fill="#f6b73c"/>
<path d="M21 9 L22 8 Q23 7.3 24 8.3 Q24.8 9.3 24 10.3 L23.2 11.2 Z" fill="#ee3333"/>
<path d="M12.5 20.8 L13.4 17.4 L15.8 19.5 Z" fill="#333"/>
</g>
</defs>
<use href="#tlc" x="196" y="919.8"/>
<use href="#tlc" x="228.2" y="919.8"/>
<use href="#tls" x="259.4" y="920.5"/>
<use href="#tls" x="291.6" y="920.5"/>
<use href="#tls" x="323.8" y="920.5"/>
<!-- loft icon -->
<path d="M357 920 H379 V933.5 L370.5 937.5 H365.5 L357 933.5 Z" fill="#5aa7e0"/>
<path d="M359 920 H377 L369.5 932 H366.5 Z" fill="#8dcdfb"/>
<circle cx="368" cy="935.5" r="5.8" fill="#f4f4f4" stroke="#707070" stroke-width="1"/>
<!-- sphere/shell icon -->
<path d="M391.5 930 Q391.5 921 400 921 Q408.5 921 408.5 930 Z" fill="#62ade4"/>
<path d="M389.8 930.5 Q400 934.5 410.2 930.5 Q400 928 389.8 930.5 Z" fill="#8dcdfb"/>
<path d="M391.5 932 Q393 939.5 400 939.5 Q407 939.5 408.5 932" fill="none" stroke="#5c5c5c" stroke-width="1"/>
<!-- unstitch small -->
<rect x="421.5" y="926" width="7.2" height="15.2" fill="#f5b787"/>
<rect x="429.5" y="926" width="7.3" height="15.2" fill="#f5b787"/>
<path d="M426 929.5 H432 M426 932.5 H432 M426 935.5 H432 M426 938.5 H432" stroke="#5a4a3f" stroke-width="0.9"/>
<path d="M434.5 921 L441.5 928 M441.5 921 L434.5 928" stroke="#f55f62" stroke-width="1.9"/>
<!-- extrude small -->
<path d="M454.5 937 H467.5 V941 H454.5 Z" fill="#b3b3b3"/>
<path d="M467.5 937 L471.5 933 V937 L467.5 941 Z" fill="#a3a3a3"/>
<path d="M454.5 924.5 H467.5 V936.5 H454.5 Z" fill="#ffb47f"/>
<path d="M454.5 924.5 L458.5 920.5 H471.5 L467.5 924.5 Z" fill="#ffd5ab"/>
<path d="M467.5 924.5 L471.5 920.5 V932.5 L467.5 936.5 Z" fill="#ee8e5d"/>
<path d="M473 922 V937" stroke="#555" stroke-width="0.8"/>
</svg>

<svg width="1536" height="967" style="left:0;top:0" viewBox="0 0 1536 967">
<defs>
<clipPath id="tubeclip"><path id="tubep" d="M434 343 C404 356 372 392 369 432 C367 462 392 490 428 490 C455 489 490 471 523 470 C545 471 578 483 598 503 C618 523 636 555 644 600 C650 630 652 655 652 690 L760 700 L819.5 640 L822.5 620 L822.5 583.3 L791.7 579.2 L791.7 577.4 C800 555 808 520 804.7 479 C795 420 760 385 724.5 366.8 C680 345 620 335 560 335.5 C510 336 460 340 434 343 Z"/></clipPath>
<filter id="bl6" x="-50%" y="-50%" width="200%" height="200%"><feGaussianBlur stdDeviation="6"/></filter>
<filter id="bl3" x="-50%" y="-50%" width="200%" height="200%"><feGaussianBlur stdDeviation="3"/></filter>
<filter id="bl10" x="-50%" y="-50%" width="200%" height="200%"><feGaussianBlur stdDeviation="10"/></filter>
<filter id="bl1" x="-50%" y="-50%" width="200%" height="200%"><feGaussianBlur stdDeviation="0.6"/></filter>
<filter id="b30" x="-20%" y="-20%" width="140%" height="140%"><feGaussianBlur stdDeviation="3.0"/></filter><filter id="b40" x="-20%" y="-20%" width="140%" height="140%"><feGaussianBlur stdDeviation="4.0"/></filter><filter id="b70" x="-20%" y="-20%" width="140%" height="140%"><feGaussianBlur stdDeviation="7.0"/></filter><filter id="b100" x="-20%" y="-20%" width="140%" height="140%"><feGaussianBlur stdDeviation="10.0"/></filter><clipPath id="rimclip"><path d="M434.0 342.0 L438.0 341.7 L442.1 341.3 L446.1 341.0 L450.1 340.7 L454.2 340.4 L458.2 340.1 L462.3 339.8 L466.3 339.6 L470.3 339.3 L474.4 339.1 L478.4 338.9 L482.5 338.7 L486.5 338.5 L490.6 338.3 L494.6 338.1 L498.6 337.9 L502.7 337.8 L506.7 337.7 L510.8 337.6 L514.8 337.5 L518.9 337.4 L522.9 337.3 L527.0 337.3 L531.0 337.2 L535.1 337.2 L539.1 337.2 L543.2 337.2 L547.2 337.3 L551.3 337.4 L555.3 337.5 L559.4 337.6 L563.4 337.7 L567.5 337.9 L571.5 338.1 L575.5 338.3 L579.6 338.7 L583.6 339.1 L587.6 339.5 L591.6 340.1 L595.6 340.7 L599.6 341.4 L603.6 342.1 L607.6 342.9 L611.5 343.8 L615.5 344.8 L619.4 345.8 L623.3 346.9 L627.2 348.0 L631.0 349.2 L634.9 350.5 L638.7 351.9 L642.5 353.3 L646.2 354.8 L650.0 356.4 L653.6 358.1 L657.3 359.8 L660.9 361.6 L664.5 363.5 L668.0 365.4 L671.5 367.6 L674.9 369.7 L678.3 372.0 L681.6 374.3 L684.9 376.7 L688.1 379.1 L691.3 381.6 L694.5 384.1 L697.5 386.8 L700.6 389.4 L703.6 392.2 L706.5 395.0 L709.3 397.9 L712.1 400.8 L714.8 403.9 L717.4 406.9 L720.0 410.1 L722.4 413.3 L724.8 416.6 L727.1 419.9 L729.3 423.3 L731.3 426.8 L733.3 430.3 L735.2 433.9 L736.9 437.6 L738.5 441.3 L739.9 445.1 L741.1 449.0 L742.2 452.9 L743.2 456.8 L744.0 460.8 L744.8 464.7 L745.4 468.7 L746.0 472.7 L746.4 476.8 L746.8 480.8 L747.0 484.8 L747.2 488.9 L747.2 492.9 L747.2 497.0 L747.0 501.0 L746.7 505.1 L746.5 509.1 L746.2 513.1 L745.8 517.2 L745.4 521.2 L744.9 525.2 L744.4 529.2 L743.9 533.3 L743.3 537.3 L742.7 541.3 L742.0 545.3 L741.4 549.3 L740.7 553.2 L739.9 557.2 L739.1 561.2 L738.3 565.2 L737.4 569.1 L736.5 573.1 L735.6 577.0 L791.7 577.4 L793.2 573.1 L794.6 568.8 L796.0 564.5 L797.2 560.2 L798.4 555.8 L799.4 551.4 L800.4 547.0 L801.3 542.5 L802.1 538.1 L802.8 533.6 L803.4 529.1 L804.0 524.6 L804.4 520.1 L804.8 515.6 L805.1 511.1 L805.3 506.6 L805.4 502.1 L805.5 497.5 L805.4 493.0 L805.3 488.5 L805.0 484.0 L804.7 479.5 L804.0 475.0 L803.1 470.6 L802.1 466.2 L801.0 461.8 L799.8 457.4 L798.4 453.1 L796.9 448.8 L795.3 444.6 L793.6 440.4 L791.8 436.3 L789.8 432.2 L787.7 428.2 L785.5 424.2 L783.2 420.3 L780.7 416.5 L778.2 412.8 L775.5 409.2 L772.7 405.6 L769.8 402.2 L766.8 398.8 L763.7 395.5 L760.4 392.3 L757.1 389.2 L753.7 386.3 L750.2 383.4 L746.6 380.6 L743.0 378.0 L739.2 375.4 L735.4 373.0 L731.5 370.6 L727.6 368.4 L723.6 366.4 L719.5 364.4 L715.4 362.6 L711.2 360.8 L707.0 359.1 L702.8 357.5 L698.5 356.0 L694.2 354.5 L689.9 353.1 L685.6 351.8 L681.3 350.5 L676.9 349.3 L672.5 348.1 L668.1 347.0 L663.7 346.0 L659.3 345.0 L654.9 344.1 L650.4 343.2 L646.0 342.4 L641.5 341.6 L637.1 340.9 L632.6 340.3 L628.1 339.6 L623.6 339.0 L619.1 338.5 L614.6 338.0 L610.1 337.6 L605.6 337.2 L601.1 336.8 L596.6 336.5 L592.1 336.2 L587.6 336.0 L583.0 335.8 L578.5 335.7 L574.0 335.6 L569.5 335.5 L564.9 335.5 L560.4 335.5 L555.9 335.5 L551.4 335.6 L546.9 335.7 L542.3 335.8 L537.8 335.9 L533.3 336.1 L528.8 336.2 L524.2 336.4 L519.7 336.6 L515.2 336.8 L510.7 337.0 L506.2 337.2 L501.6 337.5 L497.1 337.7 L492.6 338.0 L488.1 338.3 L483.6 338.6 L479.1 338.9 L474.5 339.3 L470.0 339.6 L465.5 340.0 L461.0 340.3 L456.5 340.7 L452.0 341.1 L447.5 341.6 L443.0 342.0 L438.5 342.5 L434.0 343.0 Z"/></clipPath><clipPath id="midclip"><path d="M369.7 438.0 L373.5 437.4 L377.2 436.8 L381.0 436.1 L384.7 435.5 L388.5 434.9 L392.2 434.3 L396.0 433.7 L399.7 433.2 L403.5 432.6 L407.2 432.1 L411.0 431.5 L414.8 431.0 L418.5 430.5 L422.3 430.1 L426.1 429.7 L429.9 429.3 L433.7 428.9 L437.4 428.6 L441.2 428.3 L445.0 428.1 L448.8 427.9 L452.6 427.7 L456.4 427.7 L460.2 427.7 L464.0 427.7 L467.8 427.9 L471.6 428.1 L475.4 428.4 L479.2 428.7 L483.0 429.1 L486.7 429.6 L490.5 430.1 L494.3 430.7 L498.0 431.3 L501.8 432.0 L505.5 432.8 L509.2 433.6 L512.9 434.4 L516.6 435.4 L520.3 436.3 L523.9 437.4 L527.6 438.5 L531.2 439.6 L534.8 440.8 L538.4 442.1 L541.9 443.4 L545.5 444.8 L549.0 446.2 L552.5 447.7 L555.9 449.3 L559.4 450.9 L562.8 452.6 L566.2 454.4 L569.5 456.2 L572.8 458.1 L576.1 460.0 L579.3 462.0 L582.5 464.1 L585.6 466.3 L588.7 468.5 L591.7 470.9 L594.6 473.2 L597.5 475.7 L600.3 478.3 L602.8 481.1 L605.3 484.0 L607.7 487.0 L610.0 490.0 L612.3 493.0 L614.5 496.1 L616.6 499.3 L618.6 502.5 L620.6 505.7 L622.5 509.0 L624.3 512.4 L626.1 515.7 L627.8 519.1 L629.5 522.5 L631.1 526.0 L632.6 529.5 L634.1 533.0 L635.5 536.5 L636.8 540.1 L638.1 543.6 L639.3 547.2 L640.5 550.9 L641.6 554.5 L642.7 558.1 L643.7 561.8 L644.7 565.5 L645.6 569.2 L646.4 572.9 L647.2 576.6 L648.0 580.3 L648.7 584.1 L649.3 587.8 L649.9 591.6 L650.4 595.3 L650.9 599.1 L651.3 602.9 L651.7 606.6 L652.0 610.4 L652.3 614.2 L652.5 618.0 L652.7 621.8 L652.8 625.6 L652.9 629.4 L653.0 633.2 L653.1 637.0 L653.1 640.8 L653.2 644.6 L653.1 648.4 L653.1 652.2 L653.0 656.0 L652.8 659.8 L652.7 663.6 L652.5 667.4 L652.2 671.2 L652.0 675.0 L735.6 577.0 L736.5 573.1 L737.4 569.1 L738.3 565.2 L739.1 561.2 L739.9 557.2 L740.7 553.2 L741.4 549.3 L742.0 545.3 L742.7 541.3 L743.3 537.3 L743.9 533.3 L744.4 529.2 L744.9 525.2 L745.4 521.2 L745.8 517.2 L746.2 513.1 L746.5 509.1 L746.7 505.1 L747.0 501.0 L747.2 497.0 L747.2 492.9 L747.2 488.9 L747.0 484.8 L746.8 480.8 L746.4 476.8 L746.0 472.7 L745.4 468.7 L744.8 464.7 L744.0 460.8 L743.2 456.8 L742.2 452.9 L741.1 449.0 L739.9 445.1 L738.5 441.3 L736.9 437.6 L735.2 433.9 L733.3 430.3 L731.3 426.8 L729.3 423.3 L727.1 419.9 L724.8 416.6 L722.4 413.3 L720.0 410.1 L717.4 406.9 L714.8 403.9 L712.1 400.8 L709.3 397.9 L706.5 395.0 L703.6 392.2 L700.6 389.4 L697.5 386.8 L694.5 384.1 L691.3 381.6 L688.1 379.1 L684.9 376.7 L681.6 374.3 L678.3 372.0 L674.9 369.7 L671.5 367.6 L668.0 365.4 L664.5 363.5 L660.9 361.6 L657.3 359.8 L653.6 358.1 L650.0 356.4 L646.2 354.8 L642.5 353.3 L638.7 351.9 L634.9 350.5 L631.0 349.2 L627.2 348.0 L623.3 346.9 L619.4 345.8 L615.5 344.8 L611.5 343.8 L607.6 342.9 L603.6 342.1 L599.6 341.4 L595.6 340.7 L591.6 340.1 L587.6 339.5 L583.6 339.1 L579.6 338.7 L575.5 338.3 L571.5 338.1 L567.5 337.9 L563.4 337.7 L559.4 337.6 L555.3 337.5 L551.3 337.4 L547.2 337.3 L543.2 337.2 L539.1 337.2 L535.1 337.2 L531.0 337.2 L527.0 337.3 L522.9 337.3 L518.9 337.4 L514.8 337.5 L510.8 337.6 L506.7 337.7 L502.7 337.8 L498.6 337.9 L494.6 338.1 L490.6 338.3 L486.5 338.5 L482.5 338.7 L478.4 338.9 L474.4 339.1 L470.3 339.3 L466.3 339.6 L462.3 339.8 L458.2 340.1 L454.2 340.4 L450.1 340.7 L446.1 341.0 L442.1 341.3 L438.0 341.7 L434.0 342.0 Z"/></clipPath><linearGradient id="midfadeg" x1="470" y1="0" x2="580" y2="0" gradientUnits="userSpaceOnUse"><stop offset="0" stop-color="#000"/><stop offset="1" stop-color="#fff"/></linearGradient><mask id="midfade" maskUnits="userSpaceOnUse" x="0" y="0" width="1536" height="967"><rect x="0" y="0" width="1536" height="967" fill="url(#midfadeg)"/></mask>
</defs>
<!-- tan surface -->
<path d="M724.5 366.8 C772 380 818 405 838 448 C856 485 858 540 847.3 585.1 L791.7 579.2 L791.7 577.4 C800 555 808 520 804.7 479 C795 420 760 385 724.5 366.8 Z" fill="#ada172"/>
<path d="M724.5 366.8 C772 380 818 405 838 448 C856 485 858 540 847.3 585.1 L791.7 579.2" fill="none" stroke="#3a3a30" stroke-width="1"/>
<!-- tube body -->
<path d="M434 343 C404 356 372 392 369 432 C367 462 392 490 428 490 C455 489 490 471 523 470 C545 471 578 483 598 503 C618 523 636 555 644 600 C650 630 652 655 652 690 L760 700 L819.5 640 L822.5 620 L822.5 583.3 L791.7 579.2 L791.7 577.4 C800 555 808 520 804.7 479 C795 420 760 385 724.5 366.8 C680 345 620 335 560 335.5 C510 336 460 340 434 343 Z" fill="#8c8780"/>
<g clip-path="url(#tubeclip)">
  <path d="M350 352 L470 350 Q530 352 570 372 L570 392 Q520 385 470 385 L350 385 Z" fill="#6f6b64" filter="url(#bl6)"/>
  <path d="M350 395 L470 394 Q520 396 560 410 L560 428 Q520 425 470 424 L350 424 Z" fill="#a4a29b" filter="url(#bl6)"/>
  <rect x="350" y="440" width="150" height="60" fill="#5a5753" filter="url(#bl6)"/>
  <path d="M360 444 C420 436 480 436 540 450" fill="none" stroke="#8e8c87" stroke-width="10" filter="url(#bl3)"/>
  <path d="M428 490 C455 489 490 471 523 470 C545 471 578 483 598 503 C618 523 636 555 644 600 C650 630 652 655 652 690" fill="none" stroke="#7a7975" stroke-width="5" filter="url(#bl3)"/>
<g clip-path="url(#midclip)" mask="url(#midfade)">
<path d="M587.4 458.1 L590.5 460.2 L593.6 462.5 L596.7 464.8 L599.6 467.2 L602.5 469.6 L605.4 472.2 L608.0 475.0 L610.5 477.9 L612.9 480.8 L615.3 483.8 L617.6 486.8 L619.8 489.9 L622.0 493.0 L624.1 496.2 L626.1 499.4 L628.0 502.7 L629.9 506.0 L631.8 509.4 L633.5 512.8 L635.2 516.2 L636.8 519.6 L638.4 523.1 L639.9 526.6 L641.3 530.1 L642.7 533.7 L644.0 537.3 L645.3 540.9 L646.5 544.5 L647.6 548.2 L648.7 551.8 L649.7 555.5 L650.6 559.2 L651.5 562.9 L652.4 566.6 L653.1 570.4 L653.9 574.1 L654.5 577.9 L655.2 581.6 L655.7 585.4 L656.2 589.2 L656.7 593.0 L657.1 596.8 L657.4 600.6 L657.7 604.4 L657.9 608.2 L658.1 612.0 L658.2 615.8 L658.3 619.6 L658.4 623.4 L658.5 627.2 L658.5 631.0 L658.5 634.8 L658.5 638.7 L658.4 642.5 L658.3 646.3 L658.2 650.1 L658.0 653.9 L657.8 657.7 L657.6 661.5 L657.3 665.3 L657.0 669.1" fill="none" stroke="#a2a29d" stroke-width="10" filter="url(#b40)"/>
<path d="M389.0 409.2 L392.8 408.7 L396.7 408.1 L400.5 407.6 L404.3 407.1 L408.2 406.6 L412.0 406.1 L415.9 405.6 L419.7 405.1 L423.5 404.6 L427.4 404.2 L431.2 403.7 L435.1 403.3 L438.9 402.9 L442.8 402.5 L446.6 402.2 L450.5 401.9 L454.4 401.6 L458.2 401.3 L462.1 401.1 L466.0 400.9 L469.8 400.7 L473.7 400.6 L477.6 400.5 L481.5 400.5 L485.3 400.6 L489.2 400.7 L493.1 400.8 L497.0 401.1 L500.8 401.3 L504.7 401.6 L508.5 402.0 L512.4 402.4 L516.2 402.9 L520.1 403.4 L523.9 403.9 L527.7 404.5 L531.5 405.2 L535.3 406.0 L539.1 406.8 L542.9 407.7 L546.6 408.6 L550.4 409.6 L554.1 410.6 L557.8 411.7 L561.5 412.9 L565.2 414.1 L568.8 415.4 L572.4 416.8 L576.0 418.2 L579.6 419.7 L583.2 421.2 L586.7 422.8 L590.2 424.5 L593.6 426.2 L597.1 428.1 L600.4 429.9 L603.8 431.9 L607.1 433.9 L610.3 436.0 L613.5 438.2 L616.6 440.5 L619.7 442.9 L622.7 445.3 L625.7 447.8 L628.4 450.5 L631.1 453.3 L633.7 456.1 L636.3 459.0 L638.8 461.9 L641.2 464.9 L643.6 468.0 L645.8 471.1 L648.0 474.3 L650.2 477.5 L652.3 480.7 L654.3 484.0 L656.2 487.4 L658.1 490.7 L659.9 494.2 L661.6 497.6 L663.2 501.1 L664.8 504.7 L666.3 508.2 L667.7 511.8 L669.1 515.5 L670.3 519.1 L671.5 522.8 L672.6 526.6 L673.6 530.3 L674.5 534.1 L675.3 537.8 L676.1 541.6 L676.9 545.4 L677.5 549.3 L678.1 553.1 L678.6 556.9 L679.1 560.8 L679.5 564.6 L679.8 568.5 L680.0 572.3 L680.2 576.2 L680.4 580.0 L680.4 583.9 L680.5 587.8 L680.5 591.6 L680.4 595.5 L680.4 599.4 L680.3 603.2 L680.2 607.1 L680.0 611.0 L679.8 614.8 L679.6 618.7 L679.3 622.5 L679.0 626.4 L678.7 630.2 L678.4 634.1 L678.0 637.9 L677.5 641.8 L677.1 645.6" fill="none" stroke="#7f7a71" stroke-width="24" filter="url(#b100)"/>
<path d="M409.6 378.5 L413.5 378.0 L417.4 377.6 L421.3 377.2 L425.3 376.7 L429.2 376.3 L433.1 375.9 L437.1 375.5 L441.0 375.1 L444.9 374.8 L448.9 374.4 L452.8 374.1 L456.7 373.8 L460.7 373.5 L464.6 373.2 L468.6 372.9 L472.5 372.7 L476.5 372.4 L480.4 372.2 L484.4 372.0 L488.3 371.9 L492.3 371.8 L496.2 371.7 L500.2 371.6 L504.1 371.6 L508.1 371.6 L512.0 371.7 L516.0 371.8 L519.9 371.9 L523.9 372.1 L527.8 372.3 L531.8 372.5 L535.7 372.8 L539.6 373.2 L543.6 373.5 L547.5 373.9 L551.4 374.4 L555.3 375.0 L559.2 375.6 L563.1 376.3 L567.0 377.0 L570.9 377.9 L574.7 378.7 L578.5 379.7 L582.4 380.7 L586.2 381.7 L590.0 382.9 L593.7 384.1 L597.5 385.3 L601.2 386.7 L604.9 388.1 L608.5 389.5 L612.2 391.0 L615.8 392.6 L619.4 394.3 L622.9 396.1 L626.4 397.9 L629.9 399.8 L633.3 401.7 L636.7 403.8 L640.0 405.9 L643.3 408.2 L646.5 410.5 L649.6 412.8 L652.7 415.3 L655.7 417.9 L658.6 420.5 L661.5 423.2 L664.3 426.0 L667.0 428.8 L669.7 431.7 L672.3 434.6 L674.8 437.6 L677.3 440.7 L679.7 443.8 L682.0 447.0 L684.3 450.2 L686.5 453.5 L688.6 456.8 L690.6 460.2 L692.5 463.7 L694.4 467.2 L696.1 470.7 L697.8 474.3 L699.4 477.9 L700.8 481.6 L702.1 485.3 L703.3 489.1 L704.4 492.9 L705.4 496.7 L706.3 500.6 L707.1 504.4 L707.8 508.3 L708.5 512.2 L709.0 516.1 L709.5 520.0 L709.9 524.0 L710.2 527.9 L710.4 531.8 L710.6 535.8 L710.6 539.7 L710.6 543.7 L710.6 547.6 L710.5 551.6 L710.3 555.5 L710.1 559.4 L709.9 563.4 L709.7 567.3 L709.4 571.2 L709.0 575.2 L708.7 579.1 L708.3 583.0 L707.8 586.9 L707.4 590.9 L706.9 594.8 L706.3 598.7 L705.8 602.6 L705.2 606.5 L704.5 610.4 L703.8 614.2" fill="none" stroke="#a59d8f" stroke-width="30" filter="url(#b100)"/>
<path d="M428.9 349.7 L432.9 349.3 L436.9 349.0 L440.9 348.6 L444.9 348.3 L448.9 348.0 L452.9 347.6 L457.0 347.3 L461.0 347.1 L465.0 346.8 L469.0 346.5 L473.0 346.3 L477.1 346.0 L481.1 345.8 L485.1 345.6 L489.1 345.4 L493.1 345.3 L497.2 345.1 L501.2 344.9 L505.2 344.8 L509.2 344.7 L513.3 344.6 L517.3 344.5 L521.3 344.5 L525.4 344.5 L529.4 344.5 L533.4 344.5 L537.4 344.5 L541.5 344.6 L545.5 344.7 L549.5 344.8 L553.6 344.9 L557.6 345.1 L561.6 345.3 L565.6 345.5 L569.6 345.8 L573.6 346.2 L577.7 346.6 L581.6 347.1 L585.6 347.7 L589.6 348.3 L593.6 349.0 L597.5 349.8 L601.5 350.7 L605.4 351.6 L609.3 352.5 L613.2 353.6 L617.1 354.7 L620.9 355.9 L624.7 357.1 L628.6 358.4 L632.3 359.8 L636.1 361.3 L639.8 362.8 L643.5 364.4 L647.2 366.1 L650.8 367.8 L654.4 369.6 L657.9 371.5 L661.4 373.5 L664.9 375.6 L668.3 377.8 L671.6 380.1 L674.9 382.4 L678.1 384.8 L681.3 387.3 L684.4 389.8 L687.5 392.4 L690.5 395.0 L693.5 397.7 L696.4 400.5 L699.3 403.4 L702.1 406.3 L704.8 409.2 L707.4 412.3 L710.0 415.4 L712.5 418.5 L714.9 421.8 L717.2 425.1 L719.4 428.4 L721.5 431.8 L723.6 435.3 L725.5 438.8 L727.3 442.4 L729.0 446.1 L730.6 449.8 L731.9 453.6 L733.2 457.4 L734.2 461.3 L735.2 465.2 L736.1 469.1 L736.9 473.1 L737.5 477.1 L738.1 481.1 L738.6 485.1 L738.9 489.1 L739.2 493.1 L739.4 497.1 L739.5 501.1 L739.5 505.2 L739.3 509.2 L739.1 513.2 L738.9 517.2 L738.6 521.2 L738.3 525.2 L738.0 529.3 L737.5 533.3 L737.1 537.3 L736.6 541.3 L736.1 545.2 L735.5 549.2 L734.9 553.2 L734.3 557.2 L733.6 561.2 L732.9 565.1 L732.2 569.1 L731.4 573.0 L730.6 577.0 L729.8 580.9 L728.9 584.8" fill="none" stroke="#aaa497" stroke-width="10" filter="url(#b40)"/>
</g>
<g clip-path="url(#rimclip)">
<path d="M434.0 342.0 L438.0 341.7 L442.1 341.3 L446.1 341.0 L450.1 340.7 L454.2 340.4 L458.2 340.1 L462.3 339.8 L466.3 339.6 L470.3 339.3 L474.4 339.1 L478.4 338.9 L482.5 338.7 L486.5 338.5 L490.6 338.3 L494.6 338.1 L498.6 337.9 L502.7 337.8 L506.7 337.7 L510.8 337.6 L514.8 337.5 L518.9 337.4 L522.9 337.3 L527.0 337.3 L531.0 337.2 L535.1 337.2 L539.1 337.2 L543.2 337.2 L547.2 337.3 L551.3 337.4 L555.3 337.5 L559.4 337.6 L563.4 337.7 L567.5 337.9 L571.5 338.1 L575.5 338.3 L579.6 338.7 L583.6 339.1 L587.6 339.5 L591.6 340.1 L595.6 340.7 L599.6 341.4 L603.6 342.1 L607.6 342.9 L611.5 343.8 L615.5 344.8 L619.4 345.8 L623.3 346.9 L627.2 348.0 L631.0 349.2 L634.9 350.5 L638.7 351.9 L642.5 353.3 L646.2 354.8 L650.0 356.4 L653.6 358.1 L657.3 359.8 L660.9 361.6 L664.5 363.5 L668.0 365.4 L671.5 367.6 L674.9 369.7 L678.3 372.0 L681.6 374.3 L684.9 376.7 L688.1 379.1 L691.3 381.6 L694.5 384.1 L697.5 386.8 L700.6 389.4 L703.6 392.2 L706.5 395.0 L709.3 397.9 L712.1 400.8 L714.8 403.9 L717.4 406.9 L720.0 410.1 L722.4 413.3 L724.8 416.6 L727.1 419.9 L729.3 423.3 L731.3 426.8 L733.3 430.3 L735.2 433.9 L736.9 437.6 L738.5 441.3 L739.9 445.1 L741.1 449.0 L742.2 452.9 L743.2 456.8 L744.0 460.8 L744.8 464.7 L745.4 468.7 L746.0 472.7 L746.4 476.8 L746.8 480.8 L747.0 484.8 L747.2 488.9 L747.2 492.9 L747.2 497.0 L747.0 501.0 L746.7 505.1 L746.5 509.1 L746.2 513.1 L745.8 517.2 L745.4 521.2 L744.9 525.2 L744.4 529.2 L743.9 533.3 L743.3 537.3 L742.7 541.3 L742.0 545.3 L741.4 549.3 L740.7 553.2 L739.9 557.2 L739.1 561.2 L738.3 565.2 L737.4 569.1 L736.5 573.1 L735.6 577.0 L791.7 577.4 L793.2 573.1 L794.6 568.8 L796.0 564.5 L797.2 560.2 L798.4 555.8 L799.4 551.4 L800.4 547.0 L801.3 542.5 L802.1 538.1 L802.8 533.6 L803.4 529.1 L804.0 524.6 L804.4 520.1 L804.8 515.6 L805.1 511.1 L805.3 506.6 L805.4 502.1 L805.5 497.5 L805.4 493.0 L805.3 488.5 L805.0 484.0 L804.7 479.5 L804.0 475.0 L803.1 470.6 L802.1 466.2 L801.0 461.8 L799.8 457.4 L798.4 453.1 L796.9 448.8 L795.3 444.6 L793.6 440.4 L791.8 436.3 L789.8 432.2 L787.7 428.2 L785.5 424.2 L783.2 420.3 L780.7 416.5 L778.2 412.8 L775.5 409.2 L772.7 405.6 L769.8 402.2 L766.8 398.8 L763.7 395.5 L760.4 392.3 L757.1 389.2 L753.7 386.3 L750.2 383.4 L746.6 380.6 L743.0 378.0 L739.2 375.4 L735.4 373.0 L731.5 370.6 L727.6 368.4 L723.6 366.4 L719.5 364.4 L715.4 362.6 L711.2 360.8 L707.0 359.1 L702.8 357.5 L698.5 356.0 L694.2 354.5 L689.9 353.1 L685.6 351.8 L681.3 350.5 L676.9 349.3 L672.5 348.1 L668.1 347.0 L663.7 346.0 L659.3 345.0 L654.9 344.1 L650.4 343.2 L646.0 342.4 L641.5 341.6 L637.1 340.9 L632.6 340.3 L628.1 339.6 L623.6 339.0 L619.1 338.5 L614.6 338.0 L610.1 337.6 L605.6 337.2 L601.1 336.8 L596.6 336.5 L592.1 336.2 L587.6 336.0 L583.0 335.8 L578.5 335.7 L574.0 335.6 L569.5 335.5 L564.9 335.5 L560.4 335.5 L555.9 335.5 L551.4 335.6 L546.9 335.7 L542.3 335.8 L537.8 335.9 L533.3 336.1 L528.8 336.2 L524.2 336.4 L519.7 336.6 L515.2 336.8 L510.7 337.0 L506.2 337.2 L501.6 337.5 L497.1 337.7 L492.6 338.0 L488.1 338.3 L483.6 338.6 L479.1 338.9 L474.5 339.3 L470.0 339.6 L465.5 340.0 L461.0 340.3 L456.5 340.7 L452.0 341.1 L447.5 341.6 L443.0 342.0 L438.5 342.5 L434.0 343.0 Z" fill="#8f8e8a"/>
<path d="M434.0 342.1 L438.1 341.8 L442.2 341.4 L446.3 341.1 L450.4 340.7 L454.5 340.4 L458.6 340.1 L462.7 339.9 L466.7 339.6 L470.8 339.3 L474.9 339.1 L479.0 338.8 L483.1 338.6 L487.2 338.4 L491.3 338.2 L495.4 338.0 L499.5 337.9 L503.7 337.7 L507.8 337.6 L511.9 337.4 L516.0 337.3 L520.1 337.2 L524.2 337.2 L528.3 337.1 L532.4 337.1 L536.5 337.0 L540.6 337.0 L544.7 337.0 L548.8 337.1 L552.9 337.1 L557.0 337.2 L561.1 337.3 L565.2 337.5 L569.3 337.6 L573.4 337.8 L577.5 338.1 L581.6 338.4 L585.7 338.8 L589.8 339.3 L593.9 339.8 L597.9 340.4 L602.0 341.0 L606.0 341.7 L610.0 342.5 L614.1 343.4 L618.1 344.3 L622.0 345.3 L626.0 346.3 L630.0 347.4 L633.9 348.6 L637.8 349.9 L641.7 351.2 L645.5 352.6 L649.4 354.0 L653.2 355.5 L657.0 357.1 L660.7 358.8 L664.4 360.6 L668.1 362.4 L671.7 364.3 L675.3 366.4 L678.8 368.5 L682.2 370.7 L685.7 372.9 L689.0 375.2 L692.4 377.6 L695.7 380.0 L698.9 382.5 L702.1 385.1 L705.2 387.8 L708.3 390.5 L711.3 393.3 L714.2 396.2 L717.1 399.1 L719.9 402.1 L722.6 405.2 L725.2 408.3 L727.7 411.6 L730.2 414.8 L732.5 418.2 L734.8 421.6 L737.0 425.1 L739.0 428.7 L740.9 432.3 L742.8 436.0 L744.4 439.7 L745.9 443.6 L747.2 447.4 L748.4 451.4 L749.4 455.3 L750.4 459.3 L751.2 463.3 L752.0 467.4 L752.6 471.4 L753.1 475.5 L753.5 479.6 L753.9 483.7 L754.1 487.8 L754.2 491.9 L754.1 496.0 L754.0 500.1 L753.8 504.2 L753.6 508.3 L753.3 512.4 L752.9 516.5 L752.5 520.5 L752.1 524.6 L751.6 528.7 L751.0 532.8 L750.4 536.8 L749.8 540.9 L749.2 544.9 L748.5 549.0 L747.7 553.0 L746.9 557.0 L746.1 561.1 L745.2 565.1 L744.3 569.1 L743.3 573.1 L742.3 577.0" fill="none" stroke="#8d8b86" stroke-width="8" filter="url(#b40)"/>
<path d="M624.5 343.1 L628.7 344.0 L632.8 345.0 L636.9 346.0 L641.0 347.1 L645.1 348.2 L649.2 349.4 L653.2 350.7 L657.3 352.0 L661.3 353.4 L665.2 354.9 L669.2 356.4 L673.1 358.0 L677.0 359.7 L680.8 361.5 L684.6 363.3 L688.4 365.3 L692.1 367.3 L695.8 369.4 L699.4 371.5 L703.0 373.7 L706.6 376.1 L710.0 378.5 L713.5 381.0 L716.8 383.6 L720.1 386.2 L723.3 389.0 L726.5 391.8 L729.6 394.7 L732.6 397.7 L735.5 400.8 L738.3 404.0 L741.0 407.2 L743.7 410.5 L746.2 413.9 L748.7 417.4 L751.0 420.9 L753.2 424.5 L755.3 428.2 L757.3 432.0 L759.2 435.8 L760.9 439.7 L762.4 443.6 L763.8 447.6 L765.1 451.7 L766.3 455.7 L767.3 459.8 L768.2 464.0 L769.1 468.1 L769.8 472.3 L770.4 476.5 L771.0 480.7 L771.4 484.9 L771.5 489.2 L771.6 493.4 L771.5 497.7 L771.4 501.9 L771.2 506.2 L771.0 510.4 L770.7 514.6 L770.3 518.9 L769.9 523.1 L769.4 527.3 L768.9 531.5 L768.3 535.7 L767.6 539.9 L766.9 544.1 L766.2 548.3 L765.3 552.5 L764.5 556.6 L763.5 560.8 L762.5 564.9 L761.5 569.0 L760.3 573.1 L759.2 577.2" fill="none" stroke="#6e6d69" stroke-width="16" filter="url(#b70)"/>
<path d="M434.0 342.8 L438.4 342.3 L442.8 341.8 L447.2 341.4 L451.5 341.0 L455.9 340.6 L460.3 340.3 L464.7 339.9 L469.1 339.6 L473.5 339.3 L477.9 339.0 L482.3 338.7 L486.7 338.4 L491.1 338.1 L495.5 337.9 L499.9 337.6 L504.3 337.4 L508.7 337.2 L513.1 337.0 L517.5 336.8 L521.9 336.7 L526.3 336.5 L530.7 336.4 L535.1 336.3 L539.5 336.2 L543.9 336.1 L548.3 336.0 L552.7 336.0 L557.1 335.9 L561.5 336.0 L565.9 336.0 L570.3 336.1 L574.7 336.2 L579.1 336.3 L583.5 336.5 L587.9 336.8 L592.3 337.1 L596.7 337.4 L601.1 337.8 L605.5 338.2 L609.9 338.7 L614.3 339.2 L618.6 339.8 L623.0 340.5 L627.3 341.1 L631.7 341.9 L636.0 342.7 L640.3 343.5 L644.6 344.4 L648.9 345.4 L653.2 346.4 L657.5 347.5 L661.7 348.6 L666.0 349.8 L670.2 351.1 L674.4 352.4 L678.5 353.8 L682.7 355.2 L686.8 356.8 L690.9 358.3 L695.0 360.0 L699.0 361.8 L703.0 363.6 L706.9 365.5 L710.8 367.5 L714.7 369.5 L718.5 371.7 L722.3 374.0 L726.0 376.4 L729.6 378.9 L733.1 381.5 L736.6 384.2 L740.0 387.0 L743.3 389.9 L746.5 392.9 L749.7 396.0 L752.7 399.1 L755.7 402.4 L758.5 405.8 L761.3 409.2 L763.9 412.7 L766.5 416.3 L768.9 420.0 L771.2 423.7 L773.4 427.6 L775.4 431.5 L777.3 435.4 L779.1 439.4 L780.8 443.5 L782.3 447.6 L783.7 451.8 L785.0 456.0 L786.2 460.2 L787.2 464.5 L788.2 468.8 L789.0 473.1 L789.8 477.5 L790.4 481.8 L790.6 486.2 L790.7 490.6 L790.8 495.0 L790.8 499.4 L790.7 503.8 L790.5 508.2 L790.3 512.6 L789.9 517.0 L789.6 521.4 L789.1 525.8 L788.5 530.2 L787.9 534.5 L787.2 538.9 L786.5 543.2 L785.6 547.5 L784.7 551.9 L783.7 556.1 L782.7 560.4 L781.6 564.7 L780.3 568.9 L779.1 573.1 L777.7 577.3" fill="none" stroke="#a6a7a3" stroke-width="18" filter="url(#b70)"/>
<path d="M434.0 342.9 L438.5 342.5 L443.0 342.0 L447.4 341.5 L451.9 341.1 L456.4 340.7 L460.9 340.3 L465.4 340.0 L469.8 339.6 L474.3 339.3 L478.8 338.9 L483.3 338.6 L487.8 338.3 L492.3 338.0 L496.8 337.8 L501.3 337.5 L505.8 337.3 L510.3 337.1 L514.8 336.8 L519.3 336.6 L523.8 336.5 L528.3 336.3 L532.8 336.1 L537.3 336.0 L541.8 335.9 L546.3 335.8 L550.8 335.7 L555.3 335.6 L559.8 335.6 L564.3 335.6 L568.8 335.6 L573.3 335.7 L577.8 335.8 L582.3 335.9 L586.8 336.1 L591.3 336.4 L595.7 336.6 L600.2 336.9 L604.7 337.3 L609.2 337.7 L613.7 338.2 L618.2 338.7 L622.6 339.2 L627.1 339.8 L631.5 340.4 L636.0 341.1 L640.4 341.9 L644.9 342.6 L649.3 343.5 L653.7 344.4 L658.1 345.3 L662.5 346.3 L666.9 347.4 L671.2 348.5 L675.6 349.6 L679.9 350.9 L684.2 352.2 L688.5 353.5 L692.7 355.0 L697.0 356.5 L701.2 358.0 L705.4 359.7 L709.5 361.4 L713.7 363.2 L717.8 365.0 L721.8 367.0 L725.8 369.1 L729.7 371.3 L733.5 373.7 L737.3 376.1 L741.0 378.7 L744.6 381.3 L748.2 384.1 L751.6 387.0 L755.0 390.0 L758.3 393.0 L761.5 396.2 L764.6 399.5 L767.5 402.9 L770.4 406.3 L773.2 409.9 L775.8 413.5 L778.4 417.2 L780.8 421.0 L783.1 424.9 L785.3 428.8 L787.3 432.8 L789.2 436.9 L791.0 441.0 L792.7 445.2 L794.3 449.4 L795.7 453.7 L797.0 458.0 L798.2 462.3 L799.3 466.7 L800.3 471.1 L801.1 475.5 L801.9 479.9 L802.2 484.4 L802.4 488.9 L802.5 493.4 L802.5 497.9 L802.5 502.4 L802.3 506.9 L802.1 511.4 L801.8 515.9 L801.5 520.4 L801.0 524.9 L800.4 529.3 L799.8 533.8 L799.1 538.2 L798.3 542.7 L797.4 547.1 L796.5 551.5 L795.4 555.9 L794.3 560.2 L793.1 564.5 L791.8 568.9 L790.4 573.1 L788.9 577.4" fill="none" stroke="#a0a19d" stroke-width="6" filter="url(#b30)"/>
</g>
</g>
<mask id="outm"><rect x="0" y="0" width="1536" height="967" fill="#fff"/><path d="M434 343 C404 356 372 392 369 432 C367 462 392 490 428 490 C455 489 490 471 523 470 C545 471 578 483 598 503 C618 523 636 555 644 600 C650 630 652 655 652 690 L760 700 L819.5 640 L822.5 620 L822.5 583.3 L791.7 579.2 L791.7 577.4 C800 555 808 520 804.7 479 C795 420 760 385 724.5 366.8 C680 345 620 335 560 335.5 C510 336 460 340 434 343 Z" fill="#000"/></mask>
<g fill="#f0b94e" fill-opacity="0.4" mask="url(#outm)">
<path d="M446 288 L551 261 L557 368 L455 397 Z"/>
<path d="M437 298 L503 345 L507 455 L447 412 Z"/>
<path d="M465 418 L567 388 L627 430 L524 463 Z"/>
</g>
<g fill="#e8a540" fill-opacity="0.22" clip-path="url(#tubeclip)">
<path d="M446 288 L551 261 L557 368 L455 397 Z"/>
<path d="M437 298 L503 345 L507 455 L447 412 Z"/>
<path d="M465 418 L567 388 L627 430 L524 463 Z"/>
</g>
<!-- outlines -->
<path d="M434 343 C404 356 372 392 369 432 C367 462 392 490 428 490 C455 489 490 471 523 470" fill="none" stroke="#222" stroke-width="1.1"/>
<path d="M523 470 C545 471 578 483 598 503 C618 523 636 555 644 600 C650 630 652 655 652 690" fill="none" stroke="#555550" stroke-width="0.8" stroke-opacity="0.6"/>
<path d="M369.7 438 C400 433 440 426 470 428 C520 431 570 450 600 478 C630 510 648 560 652 610 C654 640 653 660 652 675" fill="none" stroke="#1e1e1e" stroke-width="1.1"/>
<!-- seam -->
<g clip-path="url(#tubeclip)"><path d="M434 342 C480 338 530 336 570 338 C610 340 645 352 669 366 C700 385 725 410 738 440 C746 460 748 485 747 500 C746 525 741 555 735.6 577" fill="none" stroke="#d2d2ce" stroke-width="8"/></g>
<path d="M434 342 C480 338 530 336 570 338 C610 340 645 352 669 366 C700 385 725 410 738 440 C746 460 748 485 747 500 C746 525 741 555 735.6 577" fill="none" stroke="#0e0e0e" stroke-width="2.5"/>
<!-- lip -->
<path d="M741 576.5 Q765 562 794 578.5 Z" fill="#6a6863" stroke="#222" stroke-width="0.8"/>
<path d="M736 577.6 L794 579.6" stroke="#c7b98c" stroke-width="1.6"/>
<!-- end cap ellipse -->
<path d="M735.1 578.6 C690 595 655 640 650.3 694.4 C648 728 668 754 697 754.4 C730 755 765 728 785 704.8 C805 683 818 655 819.5 628.3 C821 608 812 590 801.3 582.8 Z" fill="#4d4a45" stroke="#1c1c1c" stroke-width="1.1"/>
<path d="M735.1 578.6 L738 744.5" stroke="#141414" stroke-width="1.1"/>
<path d="M735.1 578 L840 584.8" stroke="#2a2a26" stroke-width="1"/>
<!-- origin planes -->

<!-- axes -->
<path d="M428.3 279.5 L429.5 291" stroke="#1f1fe6" stroke-width="2.6"/>
<path d="M430 296 L434.3 341" stroke="#1f1fe6" stroke-width="2.6"/>
<path d="M435 345 L441 409" stroke="#6464c8" stroke-width="2" stroke-dasharray="13 4"/>
<path d="M453 412 L575 377.5" stroke="#74c874" stroke-width="2.4" stroke-dasharray="42 5 6 5"/>
<path d="M447 421 L505 466" stroke="#b85c5c" stroke-width="1.9" stroke-dasharray="30 5 6 5"/>
<path d="M505 466 L518 476" stroke="#e42020" stroke-width="2.6"/>
<circle cx="441.2" cy="416" r="6.4" fill="#c2c2c0" stroke="#8e8e8c" stroke-width="1"/>
<!-- viewcube -->
<g filter="url(#bl1)">
<path d="M1438 240 L1462 258 L1502 240 L1512 258 L1470 280 L1440 262 Z" fill="#000" fill-opacity="0.14" filter="url(#bl6)"/>
<path d="M1432.7 195 L1471.5 184.1 L1504 200.4 L1460.6 213.6 Z" fill="#efefef"/>
<path d="M1432.7 195 L1460.6 213.6 L1461.4 260 L1433.5 238.4 Z" fill="#e6e6e6"/>
<path d="M1460.6 213.6 L1504 200.4 L1500 241.5 L1461.4 260 Z" fill="#e1e1e1"/>
<g fill="none" stroke="#9a9a9a" stroke-width="0.9" stroke-dasharray="3 2">
<path d="M1432.7 195 L1471.5 184.1 L1504 200.4 L1460.6 213.6 Z"/>
<path d="M1433.5 238.4 L1461.4 260 L1500 241.5"/>
<path d="M1460.6 213.6 L1461.4 260"/><path d="M1504 200.4 L1500 241.5"/>
</g>
<path d="M1431.2 188.8 L1435 238.4" stroke="#8a8aff" stroke-width="1.6"/>
<path d="M1435 238.4 L1466.8 267.8" stroke="#f08a8a" stroke-width="1.6"/>
<path d="M1426 175 H1433.5 L1426 186.4 H1433.5" fill="none" stroke="#8a8aff" stroke-width="1.5"/>
<path d="M1467 266.3 L1474.6 277.1 M1474.6 266.3 L1467 277.1" stroke="#f08a8a" stroke-width="1.5"/>
<text x="0" y="0" font-size="8.5" fill="#6f6f6f" font-family="Liberation Sans" transform="translate(1469 238) rotate(-22)">RIGHT</text>
<text x="0" y="0" font-size="6" fill="#888" font-family="Liberation Sans" transform="translate(1437 222) rotate(35)">FRONT</text>
<text x="0" y="0" font-size="6" fill="#888" font-family="Liberation Sans" transform="translate(1463 196) rotate(-15)">TOP</text>
</g>
</svg>
</div>
</body></html>
